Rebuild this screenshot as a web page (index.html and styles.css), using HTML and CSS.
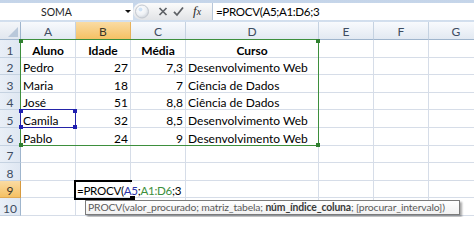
FILE: index.html
```html
<!DOCTYPE html>
<html>
<head>
<meta charset="utf-8">
<link rel="stylesheet" href="styles.css">
</head>
<body>
<div class="fbar">
  <div class="namebox"><span class="name">SOMA</span><span class="dd"></span></div>
  <div class="tools">
    <svg width="79" height="17" viewBox="0 0 79 17">
      <defs>
        <radialGradient id="bub" cx="0.4" cy="0.35" r="0.7">
          <stop offset="0" stop-color="#ffffff"/>
          <stop offset="0.6" stop-color="#eef1f5"/>
          <stop offset="1" stop-color="#c9ced6"/>
        </radialGradient>
      </defs>
      <circle cx="9" cy="8.5" r="6.5" fill="url(#bub)" stroke="#c3c8cf" stroke-width="1"/>
      <circle cx="7.5" cy="6.5" r="2" fill="#cfe2f5"/>
      <path d="M26.5 5 L33.5 12 M33.5 5 L26.5 12" stroke="#5e6166" stroke-width="1.7" fill="none"/>
      <path d="M41 8.8 L44 12 L50 4.5" stroke="#5e6166" stroke-width="1.8" fill="none"/>
    </svg>
    <span class="fx">f<span class="fxx">x</span></span>
  </div>
  <div class="formula">=PROCV(A5;A1:D6;3</div>
</div>
<div class="sheet">
  <div class="grid">
    <div class="c corner"><span class="tri"></span></div>
    <div class="c h">A</div>
    <div class="c h hs">B</div>
    <div class="c h">C</div>
    <div class="c h">D</div>
    <div class="c h">E</div>
    <div class="c h">F</div>
    <div class="c h">G</div>

    <div class="c r">1</div>
    <div class="c b ctr">Aluno</div>
    <div class="c b ctr">Idade</div>
    <div class="c b ctr">Média</div>
    <div class="c b ctr">Curso</div>
    <div class="c"></div><div class="c"></div><div class="c"></div>

    <div class="c r">2</div>
    <div class="c">Pedro</div>
    <div class="c num">27</div>
    <div class="c num">7,3</div>
    <div class="c">Desenvolvimento Web</div>
    <div class="c"></div><div class="c"></div><div class="c"></div>

    <div class="c r">3</div>
    <div class="c">Maria</div>
    <div class="c num">18</div>
    <div class="c num">7</div>
    <div class="c">Ciência de Dados</div>
    <div class="c"></div><div class="c"></div><div class="c"></div>

    <div class="c r">4</div>
    <div class="c">José</div>
    <div class="c num">51</div>
    <div class="c num">8,8</div>
    <div class="c">Ciência de Dados</div>
    <div class="c"></div><div class="c"></div><div class="c"></div>

    <div class="c r">5</div>
    <div class="c">Camila</div>
    <div class="c num">32</div>
    <div class="c num">8,5</div>
    <div class="c">Desenvolvimento Web</div>
    <div class="c"></div><div class="c"></div><div class="c"></div>

    <div class="c r">6</div>
    <div class="c">Pablo</div>
    <div class="c num">24</div>
    <div class="c num">9</div>
    <div class="c">Desenvolvimento Web</div>
    <div class="c"></div><div class="c"></div><div class="c"></div>

    <div class="c r">7</div>
    <div class="c"></div><div class="c"></div><div class="c"></div><div class="c"></div><div class="c"></div><div class="c"></div><div class="c"></div>

    <div class="c r">8</div>
    <div class="c"></div><div class="c"></div><div class="c"></div><div class="c"></div><div class="c"></div><div class="c"></div><div class="c"></div>

    <div class="c r rs">9</div>
    <div class="c"></div><div class="c"></div><div class="c"></div><div class="c"></div><div class="c"></div><div class="c"></div><div class="c"></div>

    <div class="c r">10</div>
    <div class="c"></div><div class="c"></div><div class="c"></div><div class="c"></div><div class="c"></div><div class="c"></div><div class="c"></div>
  </div>

  <div class="ref ref-green">
    <span class="hd g tl"></span><span class="hd g tr"></span><span class="hd g bl"></span><span class="hd g br"></span>
  </div>
  <div class="ref ref-blue">
    <span class="hd bl2 tl"></span><span class="hd bl2 tr"></span><span class="hd bl2 bl"></span><span class="hd bl2 br"></span>
  </div>

  <div class="editor">
    <span class="etext">=PROCV(<span class="cb">A5</span>;<span class="cg">A1:D6</span>;3</span>
    <span class="fill"></span>
  </div>

  <div class="tip">PROCV(valor_procurado; matriz_tabela; <b>núm_índice_coluna</b>; [procurar_intervalo])</div>
</div>
</body>
</html>
```
FILE: styles.css
```css
html, body {
  margin: 0;
  padding: 0;
  background: #ffffff;
}
body {
  width: 474px;
  height: 217px;
  overflow: hidden;
  font-family: Lato, "Open Sans", sans-serif;
}

/* formula bar */
.fbar {
  height: 22px;
  box-sizing: border-box;
  padding: 3px 0 2px 0;
  background: linear-gradient(#c4d4e9, #d3dfee);
  display: flex;
}
.namebox {
  width: 133px;
  background: #ffffff;
  display: flex;
  align-items: center;
}
.name {
  width: 113px;
  text-align: center;
  font-size: 10.5px;
  color: #1e1e1e;
}
.dd {
  margin-left: 12px;
  width: 0;
  height: 0;
  border-left: 3px solid transparent;
  border-right: 3px solid transparent;
  border-top: 3px solid #111;
}
.tools {
  width: 79px;
  position: relative;
  background: linear-gradient(#fbfbfb, #e2e4e7);
  border-radius: 9px 0 0 9px;
  display: flex;
  align-items: center;
}
.tools svg {
  display: block;
}
.fx {
  position: absolute;
  left: 60px;
  top: 0;
  font-family: "Liberation Serif", "DejaVu Serif", serif;
  font-style: italic;
  font-size: 13px;
  line-height: 16px;
  color: #2a2a2a;
}
.fxx {
  font-size: 10px;
}
.formula {
  flex: 1;
  background: #ffffff;
  border-left: 1px solid #b7c6d9;
  padding-left: 3px;
  padding-top: 1px;
  font-size: 11.6px;
  letter-spacing: -0.35px;
  line-height: 16px;
  color: #000;
  white-space: nowrap;
}

/* sheet */
.sheet {
  position: relative;
  width: 474px;
  height: 195px;
  overflow: hidden;
}
.grid {
  display: grid;
  grid-template-columns: 21px 55px 55px 55px 133px 55px 55px 55px;
  grid-template-rows: 18px repeat(10, 17.6px);
  width: 484px;
}
.c {
  box-sizing: border-box;
  border-right: 1px solid #d6dde8;
  border-bottom: 1px solid #d6dde8;
  display: flex;
  align-items: flex-end;
  padding: 0 2px 0 2px;
  font-size: 12px;
  line-height: 12px;
  color: #000;
  white-space: nowrap;
}
.num {
  justify-content: flex-end;
}
.ctr {
  justify-content: center;
}
.b {
  font-weight: bold;
}
.h {
  background: linear-gradient(#f8fafd, #e2e9f2);
  border-right-color: #c5d2e1;
  border-bottom-color: #9fb5cd;
  justify-content: center;
  align-items: center;
  color: #3d4c61;
  font-size: 12px;
  padding: 3px 0 0 0;
}
.hs {
  background: linear-gradient(#fadba3, #f5c164);
  border-right-color: #e7b15a;
  border-bottom-color: #d79a3f;
  color: #3a3428;
}
.r {
  background: linear-gradient(90deg, #e9eff7, #dfe7f2);
  border-right-color: #9fb5cd;
  border-bottom-color: #c5d2e1;
  justify-content: center;
  color: #3d4c61;
  font-size: 12px;
  padding: 0;
}
.rs {
  background: linear-gradient(#fadba3, #f5c164);
  border-bottom-color: #e0aa55;
  border-right-color: #d79a3f;
  color: #3a3428;
}
.corner {
  background: linear-gradient(#f4f6f9, #e1e7ef);
  border-right-color: #9fb5cd;
  border-bottom-color: #9fb5cd;
  position: relative;
  padding: 0;
}
.tri {
  position: absolute;
  right: 2px;
  bottom: 2px;
  width: 0;
  height: 0;
  border-left: 10px solid transparent;
  border-bottom: 10px solid #b9c8da;
}

/* range references */
.ref {
  position: absolute;
  box-sizing: border-box;
}
.ref-green {
  left: 20px;
  top: 17px;
  width: 299px;
  height: 106.6px;
  border: 1px solid #3d8f3d;
}
.ref-blue {
  left: 20px;
  top: 87.4px;
  width: 56px;
  height: 18.6px;
  border: 1.5px solid #2424a8;
}
.hd {
  position: absolute;
  width: 4px;
  height: 4px;
}
.g { background: #2f7f2f; }
.bl2 { background: #1f1fb0; }
.tl { left: -2px; top: -1px; }
.tr { right: -2px; top: -1px; }
.bl { left: -2px; bottom: -2px; }
.br { right: -2px; bottom: -2px; }

/* editing cell */
.editor {
  position: absolute;
  left: 74px;
  top: 157.8px;
  width: 58px;
  height: 20.6px;
  box-sizing: border-box;
  border-top: 2px solid #000;
  border-left: 2px solid #000;
  border-bottom: 2px solid #000;
}
.etext {
  position: absolute;
  left: 1px;
  bottom: 1px;
  font-size: 11.6px;
  letter-spacing: -0.3px;
  line-height: 13px;
  color: #000;
  white-space: nowrap;
  background: #fff;
  padding-right: 2px;
}
.cb { color: #2b33a6; }
.cg { color: #3d8f3d; }
.fill {
  position: absolute;
  right: -3px;
  bottom: -3px;
  width: 5px;
  height: 5px;
  background: #000;
}

/* tooltip */
.tip {
  position: absolute;
  left: 85px;
  top: 178px;
  width: 375px;
  height: 15px;
  box-sizing: border-box;
  background: linear-gradient(#ffffff, #f1f1f1);
  border: 1px solid #7b7b7b;
  box-shadow: 2px 2px 2px rgba(0,0,0,0.35);
  padding: 0 2px;
  font-size: 10.4px;
  letter-spacing: -0.15px;
  line-height: 13px;
  color: #5a5a5a;
  white-space: nowrap;
}
.tip b {
  color: #3a3a3a;
}
```
